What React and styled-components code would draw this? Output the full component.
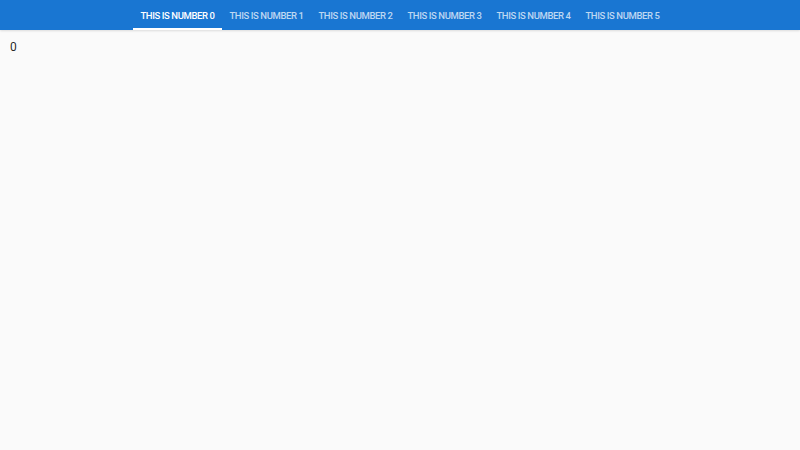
import React, { useState } from "react";
import styled, { createGlobalStyle } from "styled-components";

const GlobalStyle = createGlobalStyle`
  html, body {
    margin: 0;
    padding: 0;
    background: #fafafa;
    font-family: Roboto, "Liberation Sans", sans-serif;
  }
`;

const Page = styled.div`
  min-height: 450px;
  background: #fafafa;
`;

const AppBar = styled.header`
  background: #1976d2;
  height: 30px;
  display: flex;
  justify-content: center;
  box-shadow: 0 1px 2px rgba(0, 0, 0, 0.12);
`;

const TabList = styled.div`
  display: flex;
  height: 100%;
`;

const Tab = styled.button`
  position: relative;
  height: 30px;
  width: 89px;
  padding: 0;
  border: none;
  background: transparent;
  font-family: Roboto, "Liberation Sans", sans-serif;
  font-size: 9.5px;
  font-weight: 500;
  letter-spacing: -0.4px;
  text-transform: uppercase;
  color: ${(p) => (p.active ? "#fff" : "rgba(255, 255, 255, 0.72)")};
  cursor: pointer;

  &::after {
    content: "";
    position: absolute;
    left: 0;
    right: 0;
    bottom: 0;
    height: 2px;
    background: ${(p) => (p.active ? "#fff" : "transparent")};
  }
`;

const Panel = styled.div`
  padding: 10px 10px;
  font-size: 12px;
  color: rgba(0, 0, 0, 0.87);
`;

const tabs = [0, 1, 2, 3, 4, 5];

export default function App() {
  const [current, setCurrent] = useState(0);
  return (
    <Page>
      <GlobalStyle />
      <AppBar>
        <TabList>
          {tabs.map((n) => (
            <Tab key={n} active={current === n} onClick={() => setCurrent(n)}>
              This is number {n}
            </Tab>
          ))}
        </TabList>
      </AppBar>
      <Panel>{current}</Panel>
    </Page>
  );
}
